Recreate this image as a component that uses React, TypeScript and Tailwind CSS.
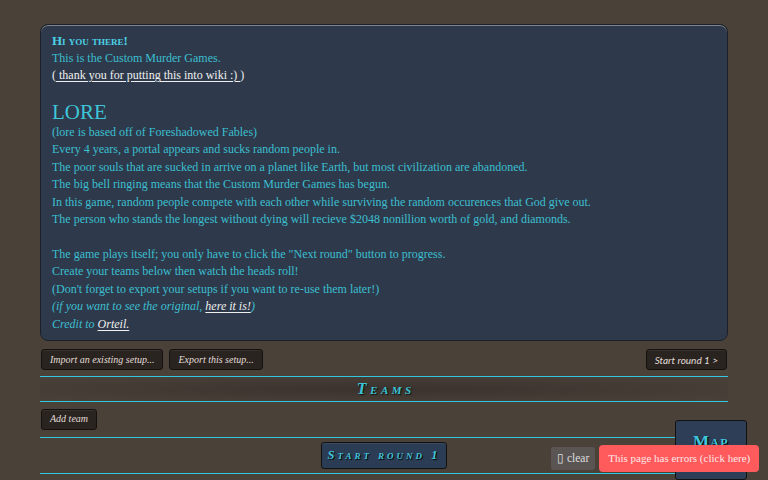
import { ReactNode } from "react";

const serif = "font-['Liberation_Serif','Times_New_Roman',serif]";

function Btn({ children, className = "" }: { children: ReactNode; className?: string }) {
  return (
    <button
      className={`h-[21px] px-[8px] whitespace-nowrap rounded-[3px] bg-[#2a2421] border border-[#15110f] shadow-[inset_0_1px_0_rgba(255,255,255,0.06)] text-[10px] italic text-[#e2ddd8] leading-none ${className}`}
    >
      {children}
    </button>
  );
}

function Rule() {
  return <div className="h-px bg-[#2fc8e0]" />;
}

export default function App() {
  return (
    <div className={`relative min-h-[480px] h-[480px] overflow-hidden bg-[#4a4139] ${serif}`}>
      <div className="w-[688px] mx-auto pt-[24px]">
        {/* intro panel */}
        <div className="rounded-[8px] bg-[#2e3a4b] border border-[#1b2029] shadow-[inset_0_1px_0_#7b838d] px-[11px] pt-[7px] pb-[7px] text-[12px] leading-[17.5px] text-[#3cbfd0]">
          <div className="font-bold text-[13px] [font-variant:small-caps] text-[#4cd0e6]">Hi you there!</div>
          <div>This is the Custom Murder Games.</div>
          <div className="text-[#f0f0f0]">
            (<span className="underline underline-offset-2"> thank you for putting this into wiki :) </span>)
          </div>
          <div className="mt-[15px] text-[21px] leading-[24px] text-[#3ec6d8]">LORE</div>
          <div>(lore is based off of Foreshadowed Fables)</div>
          <div>Every 4 years, a portal appears and sucks random people in.</div>
          <div>The poor souls that are sucked in arrive on a planet like Earth, but most civilization are abandoned.</div>
          <div>The big bell ringing means that the Custom Murder Games has begun.</div>
          <div>In this game, random people compete with each other while surviving the random occurences that God give out.</div>
          <div>The person who stands the longest without dying will recieve $2048 nonillion worth of gold, and diamonds.</div>
          <div className="h-[17px]" />
          <div>The game plays itself; you only have to click the "Next round" button to progress.</div>
          <div>Create your teams below then watch the heads roll!</div>
          <div>(Don't forget to export your setups if you want to re-use them later!)</div>
          <div className="italic">
            (if you want to see the original,{" "}
            <span className="text-[#f0f0f0] underline underline-offset-2">here it is!</span>)
          </div>
          <div className="italic">
            Credit to <span className="text-[#f0f0f0] underline underline-offset-2">Orteil.</span>
          </div>
        </div>

        {/* setup controls */}
        <div className="flex items-center gap-[6px] mt-[8px] pl-px pr-px">
          <Btn>Import an existing setup...</Btn>
          <Btn>Export this setup...</Btn>
          <Btn className="ml-auto font-['Lato',sans-serif] text-[9.5px]">Start round 1 &gt;</Btn>
        </div>

        <div className="mt-[6px]">
          <Rule />
          <div className="h-[24px] flex items-center justify-center bg-[radial-gradient(ellipse_at_center,#3a322d_0%,#463d36_70%,#4a4139_100%)]">
            <span className="italic font-bold [font-variant:small-caps] tracking-[0.22em] text-[16px] text-[#3cc3d6] [text-shadow:1px_1px_1px_#111] pl-[0.22em]">
              Teams
            </span>
          </div>
          <Rule />
        </div>

        <div className="mt-[3px] pl-px">
          <Btn>Add team</Btn>
        </div>

        <div className="mt-[7px]">
          <Rule />
          <div className="flex justify-center py-[4px]">
            <button className="h-[27px] px-[6px] whitespace-nowrap rounded-[3px] bg-[#2b3d55] border border-[#111] shadow-[inset_0_1px_0_rgba(255,255,255,0.08)] italic font-bold [font-variant:small-caps] tracking-[0.24em] text-[12.5px] text-[#45c3dc] [text-shadow:1px_1px_1px_#000]">
              Start round 1
            </button>
          </div>
          <Rule />
        </div>
      </div>

      {/* map toggle, pinned to the corner */}
      <button className="absolute left-[675px] top-[420px] w-[72px] h-[60px] rounded-[3px] bg-[#2e3e56] border border-[#111] pb-[16px] font-bold [font-variant:small-caps] text-[17px] tracking-[0.08em] text-[#3fc6de] [text-shadow:1px_1px_1px_#000]">
        Map
      </button>

      {/* error overlay */}
      <div className="absolute left-[551px] top-[445px] flex items-center gap-[4px] whitespace-nowrap">
        <button className="h-[23px] px-[6px] rounded-[3px] bg-[#5a5553] text-[11.5px] text-[#dedede] leading-none">
          ▯ clear
        </button>
        <button className="h-[27px] px-[9px] rounded-[4px] bg-[#ff5a5c] text-[11px] text-[#fde8e8] leading-none">
          This page has errors (click here)
        </button>
      </div>
    </div>
  );
}
